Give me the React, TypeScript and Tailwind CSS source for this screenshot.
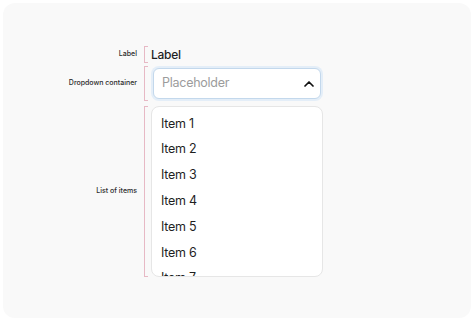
import { ChevronUp } from "lucide-react";

const items = ["Item 1", "Item 2", "Item 3", "Item 4", "Item 5", "Item 6", "Item 7"];

function Bracket() {
  return <div className="w-[4px] self-stretch border-y border-l border-[#e7b9c5]" />;
}

function Row({
  note,
  children,
  height,
}: {
  note: string;
  children: React.ReactNode;
  height: string;
}) {
  return (
    <div className={`flex items-stretch ${height}`}>
      <div className="w-[100px] flex items-center justify-end text-[7px] font-medium text-[#2b2b2b] pr-[7px]">
        {note}
      </div>
      <Bracket />
      <div className="ml-[3px] w-[172px] flex items-center">{children}</div>
    </div>
  );
}

export default function App() {
  return (
    <div
      className="w-[474px] h-[321px] bg-white p-[3px]"
      style={{ fontFamily: "Inter, 'Noto Sans', sans-serif" }}
    >
      <div className="h-full rounded-[12px] bg-[#f9f9f9] pl-[41px] pt-[43px] flex flex-col gap-[3px]">
        <Row note="Label" height="h-[17px]">
          <span className="text-[12px] tracking-[-0.02em] text-[#1f1f1f] font-medium">Label</span>
        </Row>

        <Row note="Dropdown container" height="h-[35px]">
          <div className="m-[2px] w-[168px] h-[31px] rounded-[6px] bg-white border border-[#c3d8ec] shadow-[0_0_0_2px_#e4eef8] flex items-center justify-between pl-[8px] pr-[3px]">
            <span className="text-[12.5px] tracking-[-0.02em] text-[#9c9c9c]">Placeholder</span>
            <ChevronUp size={16} strokeWidth={2.6} className="text-[#111]" />
          </div>
        </Row>

        <div className="mt-[2px]">
          <Row note="List of items" height="h-[171px]">
            <div className="w-full h-full rounded-[8px] bg-white border border-[#e6e6e6] overflow-hidden pt-[4px]">
              {items.map((item) => (
                <div
                  key={item}
                  className="h-[25.8px] flex items-center pl-[9px] text-[12.5px] tracking-[-0.02em] text-[#1f1f1f]"
                >
                  {item}
                </div>
              ))}
            </div>
          </Row>
        </div>
      </div>
    </div>
  );
}
